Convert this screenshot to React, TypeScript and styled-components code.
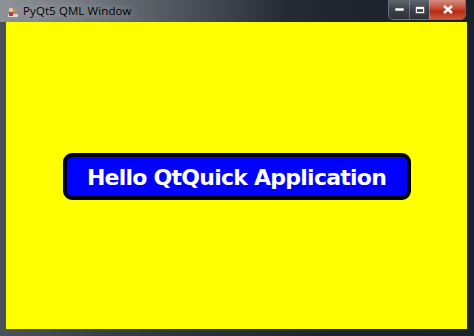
import React from "react";
import styled, { createGlobalStyle } from "styled-components";

const Global = createGlobalStyle`
  html, body { margin: 0; padding: 0; width: 474px; height: 336px; overflow: hidden; background: #1b222b; }
`;

const Window = styled.div`
  width: 474px;
  height: 336px;
  display: flex;
  flex-direction: column;
  background: linear-gradient(to right, #4a5158 0%, #2e353d 35%, #1d242d 70%, #1a212a 100%);
  box-sizing: border-box;
`;

const TitleBar = styled.div`
  height: 22px;
  display: flex;
  align-items: flex-start;
  position: relative;
  background: linear-gradient(to right, rgba(170,175,180,0.7) 0%, rgba(140,145,150,0.5) 28%, rgba(60,66,74,0.1) 60%, rgba(0,0,0,0) 100%);
`;

const TitleIcon = styled.svg`
  width: 12px;
  height: 12px;
  margin: 6px 0 0 7px;
  flex: none;
`;

const TitleText = styled.span`
  font-family: "Open Sans", "Noto Sans", sans-serif;
  font-size: 11.5px;
  color: #000;
  margin: 3px 0 0 4px;
  letter-spacing: 0.1px;
  text-shadow: 0 0 8px rgba(225,228,232,0.7);
`;

const Spacer = styled.div`
  flex: 1;
`;

const Caption = styled.div`
  display: flex;
  margin-right: 8px;
  height: 19px;
  border: 1px solid rgba(200,205,210,0.45);
  border-top: none;
  border-radius: 0 0 5px 5px;
  overflow: hidden;
`;

const CapBtn = styled.div<{ $w: number; $close?: boolean }>`
  width: ${(p) => p.$w}px;
  height: 19px;
  display: flex;
  align-items: center;
  justify-content: center;
  background: ${(p) =>
    p.$close
      ? "linear-gradient(to bottom, #d58d80 0%, #c44a34 45%, #b52a14 60%, #c9593c 100%)"
      : "linear-gradient(to bottom, rgba(140,146,152,0.6) 0%, rgba(90,96,104,0.5) 50%, rgba(60,66,74,0.5) 100%)"};
  & + & {
    border-left: 1px solid rgba(200,205,210,0.35);
  }
`;

const Client = styled.div`
  flex: 1;
  margin: 0 7px 7px 6px;
  background: #ffff00;
  display: flex;
  align-items: center;
  justify-content: center;
`;

const HelloButton = styled.div`
  width: 340px;
  height: 39px;
  background: #0000ff;
  border: 4px solid #000;
  border-radius: 9px;
  display: flex;
  align-items: center;
  justify-content: center;
  margin-top: 1px;
`;

const HelloText = styled.span`
  font-family: "DejaVu Sans", "Liberation Sans", sans-serif;
  font-weight: bold;
  font-size: 22px;
  letter-spacing: -0.75px;
  color: #ffffff;
  margin-top: 3px;
`;

export default function App() {
  return (
    <>
      <Global />
      <Window>
        <TitleBar>
          <TitleIcon viewBox="0 0 12 12">
            <rect x="1" y="8" width="10" height="3" rx="1" fill="#d8d8d8" />
            <circle cx="4" cy="4" r="2.3" fill="#e8c9a0" />
            <circle cx="8" cy="5" r="2" fill="#c98a5a" />
            <rect x="2" y="6" width="4" height="4" fill="#b04030" />
          </TitleIcon>
          <TitleText>PyQt5 QML Window</TitleText>
          <Spacer />
          <Caption>
            <CapBtn $w={20}>
              <svg width="9" height="3" viewBox="0 0 9 3">
                <rect x="0" y="0" width="9" height="3" fill="#fff" stroke="#333" strokeWidth="0.5" />
              </svg>
            </CapBtn>
            <CapBtn $w={19}>
              <svg width="10" height="8" viewBox="0 0 10 8">
                <rect x="0.5" y="0.5" width="9" height="7" fill="#fff" stroke="#333" strokeWidth="0.5" />
                <rect x="2" y="3" width="6" height="3" fill="#4a5058" />
              </svg>
            </CapBtn>
            <CapBtn $w={35} $close>
              <svg width="10" height="9" viewBox="0 0 10 9">
                <path d="M1 1 L9 8 M9 1 L1 8" stroke="#fff" strokeWidth="2.4" />
              </svg>
            </CapBtn>
          </Caption>
        </TitleBar>
        <Client>
          <HelloButton>
            <HelloText>Hello QtQuick Application</HelloText>
          </HelloButton>
        </Client>
      </Window>
    </>
  );
}
